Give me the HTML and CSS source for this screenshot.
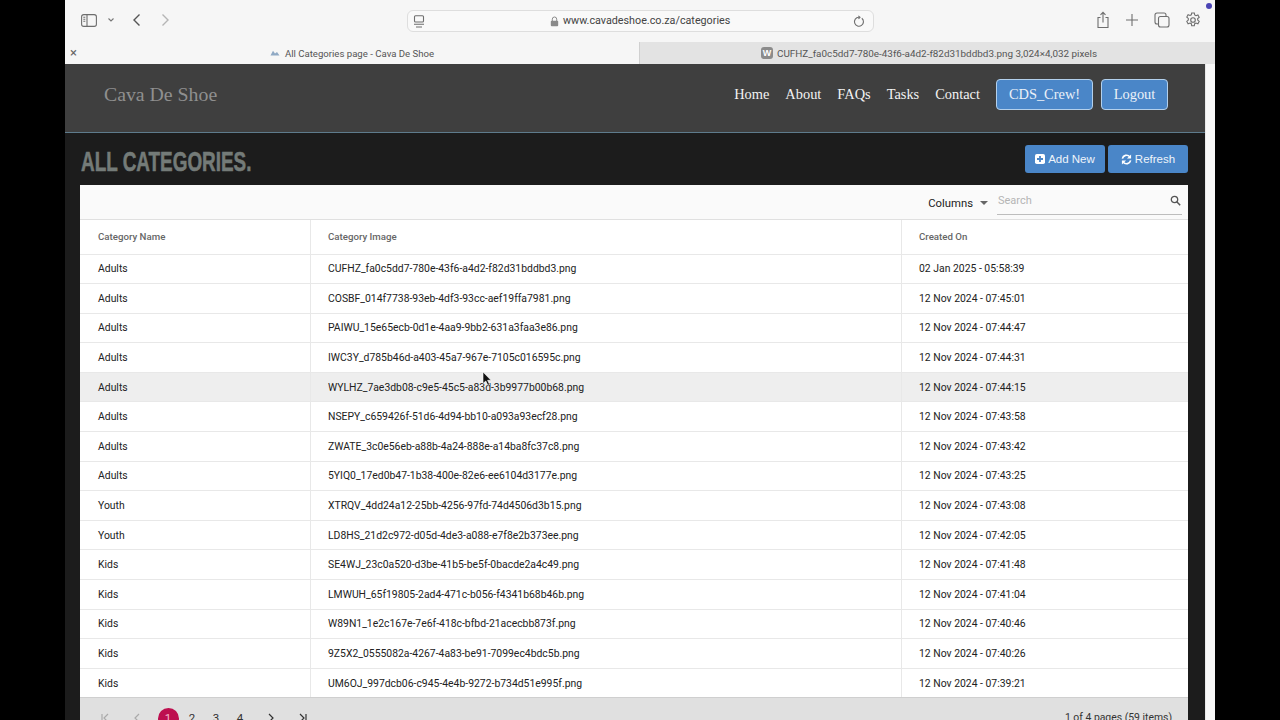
FILE: index.html
```html
<!DOCTYPE html>
<html lang="en">
<head>
<meta charset="utf-8">
<title>All Categories page - Cava De Shoe</title>
<link rel="stylesheet" href="styles.css">
</head>
<body>
<div class="window">
  <header class="toolbar">
    <div class="tb-left">
      <svg class="ic sidebar-ic" width="16" height="13" viewBox="0 0 16 13"><rect x=".6" y=".6" width="14.8" height="11.8" rx="2.2"/><path d="M6 .6v11.8M2.3 3.3h2M2.3 5.3h2M2.3 7.3h2"/></svg>
      <svg class="ic chev-ic" width="8" height="6" viewBox="0 0 8 6"><path d="M1.5 1.5 4 4l2.500-2.500"/></svg>
      <svg class="ic back-ic" width="10" height="14" viewBox="0 0 10 14"><path d="M7.500 1.500 2 7l5.500 5.500"/></svg>
      <svg class="ic fwd-ic" width="10" height="14" viewBox="0 0 10 14"><path d="M2.500 1.500 8 7l-5.500 5.500"/></svg>
    </div>
    <div class="urlbar">
      <svg class="ic reader-ic" width="12" height="13" viewBox="0 0 12 13"><rect x="1.500" y=".7" width="9" height="6.300" rx="1"/><path d="M1 9.300h10M3 12h6"/></svg>
      <span class="url"><svg class="lock" width="9" height="11" viewBox="0 0 9 11"><path d="M2.300 5V3.200a2.200 2.200 0 0 1 4.400 0V5" fill="none" stroke="#8a8a8a"/><rect x=".8" y="4.800" width="7.400" height="5.500" rx="1" fill="#8a8a8a"/></svg>www.cavadeshoe.co.za/categories</span>
      <svg class="ic reload-ic" width="12" height="13" viewBox="0 0 12 13"><path d="M8.800 3.200A4.500 4.500 0 1 1 5.800 2.200M5.300.8 7 2.200 5.500 3.800"/></svg>
    </div>
    <div class="tb-right">
      <svg class="ic" width="14" height="18" viewBox="0 0 14 18"><path d="M4.500 6.500H2v10h10v-10H9.500M7 11.500V1.500M4.500 3.800 7 1.300l2.500 2.500"/></svg>
      <svg class="ic" width="14" height="14" viewBox="0 0 14 14"><path d="M7 1v12M1 7h12"/></svg>
      <svg class="ic" width="16" height="16" viewBox="0 0 16 16"><rect x="4.500" y="4.500" width="10.500" height="10.500" rx="2"/><path d="M4.500 12H3a2 2 0 0 1-2-2V3a2 2 0 0 1 2-2h7a2 2 0 0 1 2 2v1.500"/></svg>
      <svg class="ic" width="16" height="16" viewBox="0 0 16 16"><circle cx="8" cy="8" r="2.300"/><path d="M6.700 1h2.600l.4 2 1.300.7 1.900-.7 1.300 2.300-1.500 1.300v1.500l1.500 1.300-1.300 2.300-1.900-.7-1.300.7-.4 2H6.700l-.4-2-1.300-.7-1.900.7-1.300-2.300 1.500-1.300V6.400L1.800 5.100l1.300-2.300 1.900.7 1.300-.7z"/></svg>
    </div>
    <span class="notify-dot"></span>
  </header>
  <nav class="tabs">
    <div class="tab tab-active">
      <span class="tab-close">×</span>
      <svg class="favicon" width="10" height="6" viewBox="0 0 10 6"><path d="M.5 5.500h9L7 2 5 3.500 3 .8z" fill="#8fa9c4"/></svg>
      <span>All Categories page - Cava De Shoe</span>
    </div>
    <div class="tab tab-other">
      <span class="w-icon">W</span>
      <span>CUFHZ_fa0c5dd7-780e-43f6-a4d2-f82d31bddbd3.png 3,024×4,032 pixels</span>
    </div>
  </nav>
  <div class="viewport">
    <main class="page">
      <div class="navbar">
        <a class="brand">Cava De Shoe</a>
        <div class="nav-links">
          <a>Home</a><a>About</a><a>FAQs</a><a>Tasks</a><a>Contact</a>
          <button class="nav-btn crew">CDS_Crew!</button>
          <button class="nav-btn logout">Logout</button>
        </div>
      </div>
      <div class="content">
        <div class="title-row">
          <h1>ALL CATEGORIES.</h1>
          <div class="actions">
            <button class="act-btn add"><svg width="10" height="10" viewBox="0 0 11 11"><rect width="11" height="11" rx="2" fill="#fff"/><path d="M5.500 2.200v6.600M2.200 5.500h6.600" stroke="#4a86c8" stroke-width="2"/></svg>Add New</button>
            <button class="act-btn refresh"><svg width="11" height="11" viewBox="0 0 12 12"><path d="M1.500 5A4.600 4.600 0 0 1 9.500 3M10.500 7A4.600 4.600 0 0 1 2.500 9" fill="none" stroke="#fff" stroke-width="1.800"/><path d="M11 .5V5H6.500zM1 11.500V7h4.500z" fill="#fff"/></svg>Refresh</button>
          </div>
        </div>
        <section class="card">
          <div class="grid-tools">
            <span class="columns">Columns<i class="caret"></i></span>
            <div class="search">
              <span class="ph">Search</span>
              <svg width="11" height="11" viewBox="0 0 11 11"><circle cx="4.500" cy="4.500" r="3.200" fill="none" stroke="#555" stroke-width="1.300"/><path d="m7 7 3.200 3.200" stroke="#555" stroke-width="1.500"/></svg>
            </div>
          </div>
          <table>
            <colgroup><col class="c1"><col class="c2"><col class="c3"></colgroup>
            <thead><tr><th>Category Name</th><th>Category Image</th><th>Created On</th></tr></thead>
            <tbody>
              <tr><td>Adults</td><td>CUFHZ_fa0c5dd7-780e-43f6-a4d2-f82d31bddbd3.png</td><td>02 Jan 2025 - 05:58:39</td></tr>
              <tr><td>Adults</td><td>COSBF_014f7738-93eb-4df3-93cc-aef19ffa7981.png</td><td>12 Nov 2024 - 07:45:01</td></tr>
              <tr><td>Adults</td><td>PAIWU_15e65ecb-0d1e-4aa9-9bb2-631a3faa3e86.png</td><td>12 Nov 2024 - 07:44:47</td></tr>
              <tr><td>Adults</td><td>IWC3Y_d785b46d-a403-45a7-967e-7105c016595c.png</td><td>12 Nov 2024 - 07:44:31</td></tr>
              <tr class="hover"><td>Adults</td><td>WYLHZ_7ae3db08-c9e5-45c5-a83d-3b9977b00b68.png</td><td>12 Nov 2024 - 07:44:15</td></tr>
              <tr><td>Adults</td><td>NSEPY_c659426f-51d6-4d94-bb10-a093a93ecf28.png</td><td>12 Nov 2024 - 07:43:58</td></tr>
              <tr><td>Adults</td><td>ZWATE_3c0e56eb-a88b-4a24-888e-a14ba8fc37c8.png</td><td>12 Nov 2024 - 07:43:42</td></tr>
              <tr><td>Adults</td><td>5YIQ0_17ed0b47-1b38-400e-82e6-ee6104d3177e.png</td><td>12 Nov 2024 - 07:43:25</td></tr>
              <tr><td>Youth</td><td>XTRQV_4dd24a12-25bb-4256-97fd-74d4506d3b15.png</td><td>12 Nov 2024 - 07:43:08</td></tr>
              <tr><td>Youth</td><td>LD8HS_21d2c972-d05d-4de3-a088-e7f8e2b373ee.png</td><td>12 Nov 2024 - 07:42:05</td></tr>
              <tr><td>Kids</td><td>SE4WJ_23c0a520-d3be-41b5-be5f-0bacde2a4c49.png</td><td>12 Nov 2024 - 07:41:48</td></tr>
              <tr><td>Kids</td><td>LMWUH_65f19805-2ad4-471c-b056-f4341b68b46b.png</td><td>12 Nov 2024 - 07:41:04</td></tr>
              <tr><td>Kids</td><td>W89N1_1e2c167e-7e6f-418c-bfbd-21acecbb873f.png</td><td>12 Nov 2024 - 07:40:46</td></tr>
              <tr><td>Kids</td><td>9Z5X2_0555082a-4267-4a83-be91-7099ec4bdc5b.png</td><td>12 Nov 2024 - 07:40:26</td></tr>
              <tr><td>Kids</td><td>UM6OJ_997dcb06-c945-4e4b-9272-b734d51e995f.png</td><td>12 Nov 2024 - 07:39:21</td></tr>
            </tbody>
          </table>
          <div class="pager">
            <div class="pages">
              <span class="pg wide dim"><svg width="10" height="10" viewBox="0 0 10 10"><path d="M2 1v8M8 1 4 5l4 4"/></svg></span>
              <span class="pg wide dim"><svg width="10" height="10" viewBox="0 0 10 10"><path d="M7 1 3 5l4 4"/></svg></span>
              <span class="pg current">1</span><span class="pg">2</span><span class="pg">3</span><span class="pg">4</span>
              <span class="pg wide next"><svg width="10" height="10" viewBox="0 0 10 10"><path d="m3 1 4 4-4 4"/></svg></span>
              <span class="pg wide"><svg width="10" height="10" viewBox="0 0 10 10"><path d="M8 1v8M2 1l4 4-4 4"/></svg></span>
            </div>
            <span class="pg-info">1 of 4 pages (59 items)</span>
          </div>
        </section>
      </div>
      <svg class="cursor" width="10" height="14" viewBox="0 0 10 14"><path d="M1 0v11.500l2.800-2.500 2 4.300 1.800-.8-2-4.200H9z" fill="#111" stroke="#fff" stroke-width=".6"/></svg>
    </main>
    <div class="scrollbar"></div>
  </div>
</div>
</body>
</html>
```
FILE: styles.css
```css
* { box-sizing: border-box; }
html, body { margin: 0; height: 720px; overflow: hidden; background: #000; }
body { display: flex; justify-content: center; font-family: Roboto, sans-serif; }
.window { width: 1150px; height: 720px; background: #f5f5f5; display: flex; flex-direction: column; position: relative; }

.toolbar { height: 42px; background: #f6f6f6; display: flex; align-items: center; position: relative; padding: 0 14px 2px 16px; }
.ic { fill: none; stroke: #6e6e6e; stroke-width: 1.100; flex: none; }
.tb-left { display: flex; align-items: center; width: 326px; }
.sidebar-ic { margin-right: 10px; }
.chev-ic { margin-right: 17px; stroke: #777; }
.back-ic { margin-right: 18px; stroke: #555; stroke-width: 1.400; }
.fwd-ic { stroke: #b5b5b5; stroke-width: 1.400; }
.urlbar { width: 467px; height: 22px; margin-top: 2px; border: 1px solid #dedede; border-radius: 6px; background: #f9f9f9; display: flex; align-items: center; justify-content: space-between; padding: 0 4px 0 5px; position: relative; }
.reload-ic { margin-right: 4px; }
.url { position: absolute; left: 142px; top: 3px; font-size: 10.750px; line-height: 14px; color: #444; display: flex; align-items: center; gap: 4px; }
.tb-right { margin-left: auto; display: flex; align-items: center; gap: 15px; }
.notify-dot { position: absolute; right: 3px; top: 3px; width: 6px; height: 6px; border-radius: 50%; background: #4b45b5; }

.tabs { height: 22px; display: flex; font-size: 9.600px; color: #555; }
.tab { display: flex; align-items: center; justify-content: center; gap: 5px; position: relative; }
.tab-active { background: #f6f6f6; width: 574px; }
.tab-other { background: #e3e3e3; border-left: 1px solid #d0d0d0; gap: 4px; flex: 1; font-size: 9.900px; padding-left: 3px; }
.tab-close { position: absolute; left: 5px; top: 3px; font-size: 13px; line-height: 15px; color: #666; }
.w-icon { width: 12px; height: 12px; border-radius: 3px; background: #8b8b8b; color: #fff; font: 700 9px/12px "Liberation Sans", sans-serif; text-align: center; }

.viewport { flex: 1; display: flex; min-height: 0; }
.page { flex: 1; min-width: 0; background: #1c1c1c; overflow: hidden; position: relative; }
.scrollbar { width: 10px; background: #f8f8f8; border-left: 1px solid #e8e8e8; }

.navbar { height: 69px; background: #3f3f3f; border-bottom: 1px solid #5e7b8c; display: flex; align-items: center; justify-content: space-between; padding: 0 37px 8px 39px; font-family: "Liberation Serif", serif; }
.brand { font-size: 19.800px; color: #8f8f8f; }
.nav-links { display: flex; align-items: center; font-size: 14.400px; color: #f2f2f2; gap: 16px; }
.nav-btn { font: 14.400px "Liberation Serif", serif; height: 31px; color: #eaf1f8; background: #4a86c8; border: 1px solid #b3d0ec; border-radius: 4px; padding: 0; }
.crew { width: 97px; }
.logout { width: 67px; margin-left: -8px; }

.content { padding: 0 17px 0 15px; }
.title-row { height: 52px; display: flex; justify-content: space-between; align-items: flex-start; }
h1 { margin: 14px 0 0 1px; font: 700 28px/30px "Liberation Sans", sans-serif; color: #747b78; white-space: nowrap; -webkit-text-stroke: .6px #747b78; transform: scaleX(.675); transform-origin: left center; }
.actions { display: flex; gap: 3px; margin-top: 12px; }
.act-btn { height: 28px; border: 0; border-radius: 3px; background: #4a86c8; color: #eef4fa; font: 11.500px "Liberation Sans", sans-serif; display: flex; align-items: center; justify-content: center; gap: 3px; padding: 0; }
.add { width: 80px; }
.refresh { width: 80px; }

.card { background: #fff; }
.grid-tools { height: 35px; background: #fafafa; border-bottom: 1px solid #e0e0e0; display: flex; align-items: center; justify-content: flex-end; padding: 0 6px 0 0; }
.columns { font-size: 11.300px; color: #222; display: flex; align-items: center; margin: 2px 9px 0 0; }
.caret { width: 0; height: 0; border: 4px solid transparent; border-top-color: #666; border-bottom: 0; margin-left: 7px; }
.search { width: 185px; height: 28px; border-bottom: 1px solid #bdbdbd; display: flex; align-items: center; justify-content: space-between; padding: 0 1px; font-size: 11px; color: #b5b5b5; margin-bottom: 3px; }

table { width: 100%; border-collapse: collapse; table-layout: fixed; font-size: 10.400px; color: #222; }
.c1 { width: 230.500px; }
.c3 { width: 286.500px; }
th, td { text-align: left; padding: 0 0 0 17px; border-bottom: 1px solid #e8e8e8; border-left: 1px solid #e8e8e8; white-space: nowrap; }
th:first-child, td:first-child { border-left: 0; padding-left: 18px; }
th { height: 34px; font-size: 9.700px; font-weight: 500; color: #666; }
td { height: 29.600px; }
.hover td { background: #eeeeee; }

.pager { height: 30px; background: #e0e0e0; border-top: 1px solid #cfcfcf; margin-top: -1px; position: relative; z-index: 1; display: flex; justify-content: space-between; padding: 10px 16px 0 9px; font-size: 10.400px; color: #333; }
.pages { display: flex; align-items: flex-start; height: 20px; font-size: 11.500px; }
.pg { width: 24px; text-align: center; line-height: 20px; }
.pg svg { fill: none; stroke: #333; stroke-width: 1.200; margin-top: 5px; display: block; margin-left: auto; margin-right: auto; }
.wide { width: 32px; }
.dim svg { stroke: #aaa; }
.next { margin-left: 3px; }
.current { width: 21px; height: 21px; border-radius: 50%; background: #bd0f4f; color: #f5b8cd; margin: 0 1.500px 0 4.500px; }
.pg-info { line-height: 20px; }

.cursor { position: absolute; left: 417px; top: 308px; }
```
